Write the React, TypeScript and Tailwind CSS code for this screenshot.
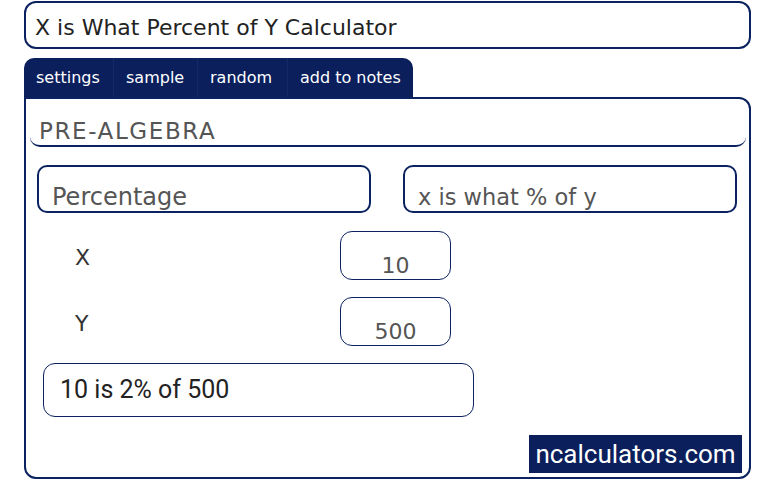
export default function App() {
  const tabs = [
    { label: "settings", w: "w-[90px]" },
    { label: "sample", w: "w-[84px]" },
    { label: "random", w: "w-[90px]" },
    { label: "add to notes", w: "w-[125px]" },
  ];

  return (
    <div className="w-[770px] h-[479px] bg-white overflow-hidden font-['DejaVu_Sans',sans-serif]">
      {/* title */}
      <div className="ml-[24px] mt-[1px] w-[727px] h-[48px] border-2 border-[#0b2260] rounded-[12px] flex items-center pl-[9px] pt-[4px] text-[22px] text-[#222]">
        X is What Percent of Y Calculator
      </div>

      {/* tabs */}
      <div className="ml-[24px] mt-[9px] w-[389px] h-[39px] bg-[#0a1f5c] rounded-t-[10px] flex">
        {tabs.map((t, i) => (
          <div
            key={t.label}
            className={`${t.w} h-full flex items-center pl-[12px] text-[16px] text-white ${i < tabs.length - 1 ? "border-r border-[#13296a]" : ""}`}
          >
            {t.label}
          </div>
        ))}
      </div>

      {/* panel */}
      <div className="ml-[24px] w-[727px] h-[382px] border-2 border-[#0b2260] rounded-tr-[12px] rounded-b-[12px] flex flex-col">
        <div className="mx-[4px] mr-[3px] h-[48px] border-b-2 border-[#0b2260] rounded-b-[10px] flex items-end pb-[4px] pl-[9px] text-[23px] leading-[20px] tracking-[1.6px] text-[#555]">
          PRE-ALGEBRA
        </div>

        <div className="mt-[18px] ml-[11px] flex gap-[32px]">
          <div className="w-[334px] h-[48px] border-2 border-[#0b2260] rounded-[10px] flex items-end pb-[4px] pl-[13px] text-[24px] leading-[20px] text-[#555]">
            Percentage
          </div>
          <div className="w-[334px] h-[48px] border-2 border-[#0b2260] rounded-[10px] flex items-end pb-[4px] pl-[13px] text-[22.5px] leading-[20px] text-[#555]">
            x is what % of y
          </div>
        </div>

        <div className="mt-[18px] flex items-center">
          <div className="w-[314px] pl-[49px] text-[22px] text-[#333] self-start pt-[10px]">X</div>
          <div className="w-[111px] h-[49px] border-[1.5px] border-[#0b2260] rounded-[12px] flex items-end justify-center pb-[3px] text-[22px] leading-[20px] text-[#555]">
            10
          </div>
        </div>

        <div className="mt-[17px] flex items-center">
          <div className="w-[314px] pl-[49px] text-[22px] text-[#333] self-start pt-[10px]">Y</div>
          <div className="w-[111px] h-[49px] border-[1.5px] border-[#0b2260] rounded-[12px] flex items-end justify-center pb-[3px] text-[22px] leading-[20px] text-[#555]">
            500
          </div>
        </div>

        <div className="mt-[17px] ml-[17px] w-[431px] h-[54px] border-[1.5px] border-[#0b2260] rounded-[12px] flex items-center pl-[16px] font-['Roboto',sans-serif] text-[25px] text-[#222]">
          10 is 2% of 500
        </div>

        <div className="mt-[18px] self-end mr-[7px] w-[213px] h-[38px] bg-[#0a1f5c] flex items-center justify-center font-['Roboto',sans-serif] text-[26px] text-white">
          ncalculators.com
        </div>
      </div>
    </div>
  );
}
